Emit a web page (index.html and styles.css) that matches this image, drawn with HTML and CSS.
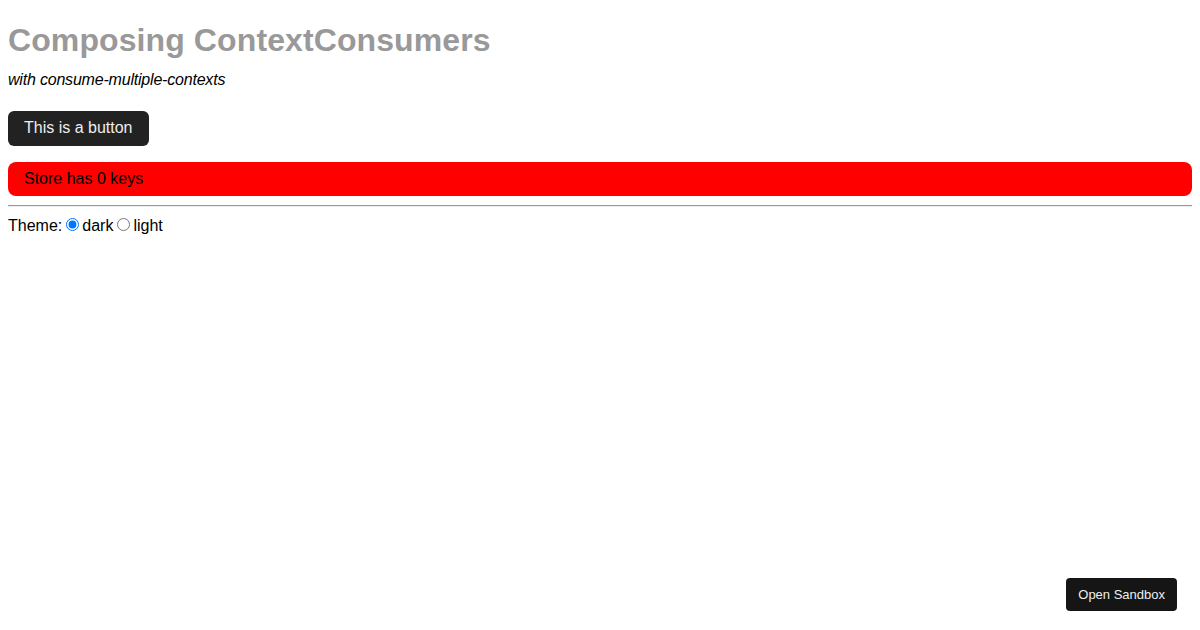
FILE: index.html
```html
<!DOCTYPE html>
<html lang="en">
<head>
  <meta charset="UTF-8">
  <title>Composing ContextConsumers</title>
  <link rel="stylesheet" href="styles.css">
</head>
<body>

  <h1 class="title">Composing ContextConsumers</h1>
  <p class="subtitle">with consume-multiple-contexts</p>

  <div class="demo">
    <button class="themed-btn">This is a button</button>
    <div class="store-box">Store has 0 keys</div>
  </div>

  <hr>

  <div class="theme-picker">Theme:<label><input type="radio" name="theme" value="dark" checked>dark</label><label><input type="radio" name="theme" value="light">light</label></div>

  <a href="#" class="open-sandbox">Open Sandbox</a>

</body>
</html>
```

FILE: styles.css
```css
body {
  margin: 8px;
  font-family: "Liberation Sans", Arial, sans-serif;
  font-size: 16px;
  color: #000;
  background: #fff;
}

.title {
  font-size: 32px;
  color: #999;
  letter-spacing: 0.1px;
  margin: 14px 0 12px;
}
.subtitle {
  font-style: italic;
  letter-spacing: -0.2px;
  margin: 0;
}

.demo {
  display: flex;
  flex-direction: column;
  align-items: flex-start;
  gap: 16px;
  margin-top: 22px;
}
.themed-btn {
  font-family: inherit;
  font-size: 16px;
  background: #222;
  color: #eee;
  border: none;
  border-radius: 6px;
  padding: 8px 16px 9px;
  cursor: pointer;
}
.store-box {
  align-self: stretch;
  background: #f00;
  border-radius: 8px;
  padding: 8px 16px;
}

hr {
  margin: 9px 0 8px;
  border: none;
  border-top: 1px solid #999;
  border-bottom: 1px solid #eee;
}

.theme-picker input {
  margin: 3px 3px 0 4px;
}

.open-sandbox {
  position: fixed;
  right: 23px;
  bottom: 19px;
  background: #151515;
  color: #eee;
  font-size: 13px;
  text-decoration: none;
  padding: 9px 12px;
  border-radius: 4px;
}
```
